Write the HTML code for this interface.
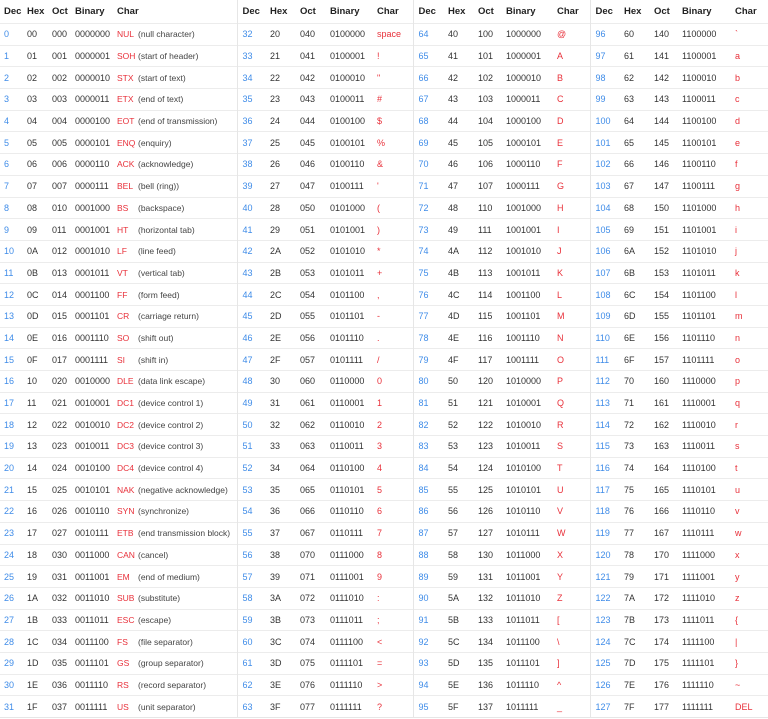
<!DOCTYPE html>
<html><head><meta charset="utf-8"><style>
html,body{margin:0;padding:0;background:#fff;width:768px;height:719px;overflow:hidden}
table{border-collapse:collapse;table-layout:fixed;width:768px;font-family:"Liberation Sans",sans-serif;font-size:9px;color:#333}
td,th{padding:0 0 0 4px;text-align:left;white-space:nowrap;overflow:hidden;border-top:1px solid #ececec}
th{font-weight:bold;height:23px;border-top:none;font-size:9.5px;color:#222}
tr.r td{height:20.7px}
td.d{color:#3f8ce8}
td.c,span.a{color:#e8303a}
span.a{display:inline-block;width:21px;font-size:8.5px;overflow:visible}
span.s{color:#444;font-size:8.5px}
.g{border-left:1px solid #e6e6e6;padding-left:5px}
table{border-bottom:1px solid #e6e6e6}
</style></head><body>
<table>
<colgroup><col style="width:23px"><col style="width:25px"><col style="width:23px"><col style="width:42px"><col style="width:124px">
<col style="width:29px"><col style="width:30px"><col style="width:30px"><col style="width:47px"><col style="width:40px">
<col style="width:31px"><col style="width:30px"><col style="width:28px"><col style="width:51px"><col style="width:37px">
<col style="width:30px"><col style="width:30px"><col style="width:28px"><col style="width:53px"><col style="width:37px"></colgroup>
<tr><th>Dec</th><th>Hex</th><th>Oct</th><th>Binary</th><th>Char</th><th class="g">Dec</th><th>Hex</th><th>Oct</th><th>Binary</th><th>Char</th><th class="g">Dec</th><th>Hex</th><th>Oct</th><th>Binary</th><th>Char</th><th class="g">Dec</th><th>Hex</th><th>Oct</th><th>Binary</th><th>Char</th></tr>
<tr class="r"><td class="d">0</td><td>00</td><td>000</td><td>0000000</td><td><span class="a">NUL</span><span class="s">(null character)</span></td><td class="d g">32</td><td>20</td><td>040</td><td>0100000</td><td class="c">space</td><td class="d g">64</td><td>40</td><td>100</td><td>1000000</td><td class="c">@</td><td class="d g">96</td><td>60</td><td>140</td><td>1100000</td><td class="c">`</td></tr>
<tr class="r"><td class="d">1</td><td>01</td><td>001</td><td>0000001</td><td><span class="a">SOH</span><span class="s">(start of header)</span></td><td class="d g">33</td><td>21</td><td>041</td><td>0100001</td><td class="c">!</td><td class="d g">65</td><td>41</td><td>101</td><td>1000001</td><td class="c">A</td><td class="d g">97</td><td>61</td><td>141</td><td>1100001</td><td class="c">a</td></tr>
<tr class="r"><td class="d">2</td><td>02</td><td>002</td><td>0000010</td><td><span class="a">STX</span><span class="s">(start of text)</span></td><td class="d g">34</td><td>22</td><td>042</td><td>0100010</td><td class="c">"</td><td class="d g">66</td><td>42</td><td>102</td><td>1000010</td><td class="c">B</td><td class="d g">98</td><td>62</td><td>142</td><td>1100010</td><td class="c">b</td></tr>
<tr class="r"><td class="d">3</td><td>03</td><td>003</td><td>0000011</td><td><span class="a">ETX</span><span class="s">(end of text)</span></td><td class="d g">35</td><td>23</td><td>043</td><td>0100011</td><td class="c">#</td><td class="d g">67</td><td>43</td><td>103</td><td>1000011</td><td class="c">C</td><td class="d g">99</td><td>63</td><td>143</td><td>1100011</td><td class="c">c</td></tr>
<tr class="r"><td class="d">4</td><td>04</td><td>004</td><td>0000100</td><td><span class="a">EOT</span><span class="s">(end of transmission)</span></td><td class="d g">36</td><td>24</td><td>044</td><td>0100100</td><td class="c">$</td><td class="d g">68</td><td>44</td><td>104</td><td>1000100</td><td class="c">D</td><td class="d g">100</td><td>64</td><td>144</td><td>1100100</td><td class="c">d</td></tr>
<tr class="r"><td class="d">5</td><td>05</td><td>005</td><td>0000101</td><td><span class="a">ENQ</span><span class="s">(enquiry)</span></td><td class="d g">37</td><td>25</td><td>045</td><td>0100101</td><td class="c">%</td><td class="d g">69</td><td>45</td><td>105</td><td>1000101</td><td class="c">E</td><td class="d g">101</td><td>65</td><td>145</td><td>1100101</td><td class="c">e</td></tr>
<tr class="r"><td class="d">6</td><td>06</td><td>006</td><td>0000110</td><td><span class="a">ACK</span><span class="s">(acknowledge)</span></td><td class="d g">38</td><td>26</td><td>046</td><td>0100110</td><td class="c">&amp;</td><td class="d g">70</td><td>46</td><td>106</td><td>1000110</td><td class="c">F</td><td class="d g">102</td><td>66</td><td>146</td><td>1100110</td><td class="c">f</td></tr>
<tr class="r"><td class="d">7</td><td>07</td><td>007</td><td>0000111</td><td><span class="a">BEL</span><span class="s">(bell (ring))</span></td><td class="d g">39</td><td>27</td><td>047</td><td>0100111</td><td class="c">'</td><td class="d g">71</td><td>47</td><td>107</td><td>1000111</td><td class="c">G</td><td class="d g">103</td><td>67</td><td>147</td><td>1100111</td><td class="c">g</td></tr>
<tr class="r"><td class="d">8</td><td>08</td><td>010</td><td>0001000</td><td><span class="a">BS</span><span class="s">(backspace)</span></td><td class="d g">40</td><td>28</td><td>050</td><td>0101000</td><td class="c">(</td><td class="d g">72</td><td>48</td><td>110</td><td>1001000</td><td class="c">H</td><td class="d g">104</td><td>68</td><td>150</td><td>1101000</td><td class="c">h</td></tr>
<tr class="r"><td class="d">9</td><td>09</td><td>011</td><td>0001001</td><td><span class="a">HT</span><span class="s">(horizontal tab)</span></td><td class="d g">41</td><td>29</td><td>051</td><td>0101001</td><td class="c">)</td><td class="d g">73</td><td>49</td><td>111</td><td>1001001</td><td class="c">I</td><td class="d g">105</td><td>69</td><td>151</td><td>1101001</td><td class="c">i</td></tr>
<tr class="r"><td class="d">10</td><td>0A</td><td>012</td><td>0001010</td><td><span class="a">LF</span><span class="s">(line feed)</span></td><td class="d g">42</td><td>2A</td><td>052</td><td>0101010</td><td class="c">*</td><td class="d g">74</td><td>4A</td><td>112</td><td>1001010</td><td class="c">J</td><td class="d g">106</td><td>6A</td><td>152</td><td>1101010</td><td class="c">j</td></tr>
<tr class="r"><td class="d">11</td><td>0B</td><td>013</td><td>0001011</td><td><span class="a">VT</span><span class="s">(vertical tab)</span></td><td class="d g">43</td><td>2B</td><td>053</td><td>0101011</td><td class="c">+</td><td class="d g">75</td><td>4B</td><td>113</td><td>1001011</td><td class="c">K</td><td class="d g">107</td><td>6B</td><td>153</td><td>1101011</td><td class="c">k</td></tr>
<tr class="r"><td class="d">12</td><td>0C</td><td>014</td><td>0001100</td><td><span class="a">FF</span><span class="s">(form feed)</span></td><td class="d g">44</td><td>2C</td><td>054</td><td>0101100</td><td class="c">,</td><td class="d g">76</td><td>4C</td><td>114</td><td>1001100</td><td class="c">L</td><td class="d g">108</td><td>6C</td><td>154</td><td>1101100</td><td class="c">l</td></tr>
<tr class="r"><td class="d">13</td><td>0D</td><td>015</td><td>0001101</td><td><span class="a">CR</span><span class="s">(carriage return)</span></td><td class="d g">45</td><td>2D</td><td>055</td><td>0101101</td><td class="c">-</td><td class="d g">77</td><td>4D</td><td>115</td><td>1001101</td><td class="c">M</td><td class="d g">109</td><td>6D</td><td>155</td><td>1101101</td><td class="c">m</td></tr>
<tr class="r"><td class="d">14</td><td>0E</td><td>016</td><td>0001110</td><td><span class="a">SO</span><span class="s">(shift out)</span></td><td class="d g">46</td><td>2E</td><td>056</td><td>0101110</td><td class="c">.</td><td class="d g">78</td><td>4E</td><td>116</td><td>1001110</td><td class="c">N</td><td class="d g">110</td><td>6E</td><td>156</td><td>1101110</td><td class="c">n</td></tr>
<tr class="r"><td class="d">15</td><td>0F</td><td>017</td><td>0001111</td><td><span class="a">SI</span><span class="s">(shift in)</span></td><td class="d g">47</td><td>2F</td><td>057</td><td>0101111</td><td class="c">/</td><td class="d g">79</td><td>4F</td><td>117</td><td>1001111</td><td class="c">O</td><td class="d g">111</td><td>6F</td><td>157</td><td>1101111</td><td class="c">o</td></tr>
<tr class="r"><td class="d">16</td><td>10</td><td>020</td><td>0010000</td><td><span class="a">DLE</span><span class="s">(data link escape)</span></td><td class="d g">48</td><td>30</td><td>060</td><td>0110000</td><td class="c">0</td><td class="d g">80</td><td>50</td><td>120</td><td>1010000</td><td class="c">P</td><td class="d g">112</td><td>70</td><td>160</td><td>1110000</td><td class="c">p</td></tr>
<tr class="r"><td class="d">17</td><td>11</td><td>021</td><td>0010001</td><td><span class="a">DC1</span><span class="s">(device control 1)</span></td><td class="d g">49</td><td>31</td><td>061</td><td>0110001</td><td class="c">1</td><td class="d g">81</td><td>51</td><td>121</td><td>1010001</td><td class="c">Q</td><td class="d g">113</td><td>71</td><td>161</td><td>1110001</td><td class="c">q</td></tr>
<tr class="r"><td class="d">18</td><td>12</td><td>022</td><td>0010010</td><td><span class="a">DC2</span><span class="s">(device control 2)</span></td><td class="d g">50</td><td>32</td><td>062</td><td>0110010</td><td class="c">2</td><td class="d g">82</td><td>52</td><td>122</td><td>1010010</td><td class="c">R</td><td class="d g">114</td><td>72</td><td>162</td><td>1110010</td><td class="c">r</td></tr>
<tr class="r"><td class="d">19</td><td>13</td><td>023</td><td>0010011</td><td><span class="a">DC3</span><span class="s">(device control 3)</span></td><td class="d g">51</td><td>33</td><td>063</td><td>0110011</td><td class="c">3</td><td class="d g">83</td><td>53</td><td>123</td><td>1010011</td><td class="c">S</td><td class="d g">115</td><td>73</td><td>163</td><td>1110011</td><td class="c">s</td></tr>
<tr class="r"><td class="d">20</td><td>14</td><td>024</td><td>0010100</td><td><span class="a">DC4</span><span class="s">(device control 4)</span></td><td class="d g">52</td><td>34</td><td>064</td><td>0110100</td><td class="c">4</td><td class="d g">84</td><td>54</td><td>124</td><td>1010100</td><td class="c">T</td><td class="d g">116</td><td>74</td><td>164</td><td>1110100</td><td class="c">t</td></tr>
<tr class="r"><td class="d">21</td><td>15</td><td>025</td><td>0010101</td><td><span class="a">NAK</span><span class="s">(negative acknowledge)</span></td><td class="d g">53</td><td>35</td><td>065</td><td>0110101</td><td class="c">5</td><td class="d g">85</td><td>55</td><td>125</td><td>1010101</td><td class="c">U</td><td class="d g">117</td><td>75</td><td>165</td><td>1110101</td><td class="c">u</td></tr>
<tr class="r"><td class="d">22</td><td>16</td><td>026</td><td>0010110</td><td><span class="a">SYN</span><span class="s">(synchronize)</span></td><td class="d g">54</td><td>36</td><td>066</td><td>0110110</td><td class="c">6</td><td class="d g">86</td><td>56</td><td>126</td><td>1010110</td><td class="c">V</td><td class="d g">118</td><td>76</td><td>166</td><td>1110110</td><td class="c">v</td></tr>
<tr class="r"><td class="d">23</td><td>17</td><td>027</td><td>0010111</td><td><span class="a">ETB</span><span class="s">(end transmission block)</span></td><td class="d g">55</td><td>37</td><td>067</td><td>0110111</td><td class="c">7</td><td class="d g">87</td><td>57</td><td>127</td><td>1010111</td><td class="c">W</td><td class="d g">119</td><td>77</td><td>167</td><td>1110111</td><td class="c">w</td></tr>
<tr class="r"><td class="d">24</td><td>18</td><td>030</td><td>0011000</td><td><span class="a">CAN</span><span class="s">(cancel)</span></td><td class="d g">56</td><td>38</td><td>070</td><td>0111000</td><td class="c">8</td><td class="d g">88</td><td>58</td><td>130</td><td>1011000</td><td class="c">X</td><td class="d g">120</td><td>78</td><td>170</td><td>1111000</td><td class="c">x</td></tr>
<tr class="r"><td class="d">25</td><td>19</td><td>031</td><td>0011001</td><td><span class="a">EM</span><span class="s">(end of medium)</span></td><td class="d g">57</td><td>39</td><td>071</td><td>0111001</td><td class="c">9</td><td class="d g">89</td><td>59</td><td>131</td><td>1011001</td><td class="c">Y</td><td class="d g">121</td><td>79</td><td>171</td><td>1111001</td><td class="c">y</td></tr>
<tr class="r"><td class="d">26</td><td>1A</td><td>032</td><td>0011010</td><td><span class="a">SUB</span><span class="s">(substitute)</span></td><td class="d g">58</td><td>3A</td><td>072</td><td>0111010</td><td class="c">:</td><td class="d g">90</td><td>5A</td><td>132</td><td>1011010</td><td class="c">Z</td><td class="d g">122</td><td>7A</td><td>172</td><td>1111010</td><td class="c">z</td></tr>
<tr class="r"><td class="d">27</td><td>1B</td><td>033</td><td>0011011</td><td><span class="a">ESC</span><span class="s">(escape)</span></td><td class="d g">59</td><td>3B</td><td>073</td><td>0111011</td><td class="c">;</td><td class="d g">91</td><td>5B</td><td>133</td><td>1011011</td><td class="c">[</td><td class="d g">123</td><td>7B</td><td>173</td><td>1111011</td><td class="c">{</td></tr>
<tr class="r"><td class="d">28</td><td>1C</td><td>034</td><td>0011100</td><td><span class="a">FS</span><span class="s">(file separator)</span></td><td class="d g">60</td><td>3C</td><td>074</td><td>0111100</td><td class="c">&lt;</td><td class="d g">92</td><td>5C</td><td>134</td><td>1011100</td><td class="c">\</td><td class="d g">124</td><td>7C</td><td>174</td><td>1111100</td><td class="c">|</td></tr>
<tr class="r"><td class="d">29</td><td>1D</td><td>035</td><td>0011101</td><td><span class="a">GS</span><span class="s">(group separator)</span></td><td class="d g">61</td><td>3D</td><td>075</td><td>0111101</td><td class="c">=</td><td class="d g">93</td><td>5D</td><td>135</td><td>1011101</td><td class="c">]</td><td class="d g">125</td><td>7D</td><td>175</td><td>1111101</td><td class="c">}</td></tr>
<tr class="r"><td class="d">30</td><td>1E</td><td>036</td><td>0011110</td><td><span class="a">RS</span><span class="s">(record separator)</span></td><td class="d g">62</td><td>3E</td><td>076</td><td>0111110</td><td class="c">&gt;</td><td class="d g">94</td><td>5E</td><td>136</td><td>1011110</td><td class="c">^</td><td class="d g">126</td><td>7E</td><td>176</td><td>1111110</td><td class="c">~</td></tr>
<tr class="r"><td class="d">31</td><td>1F</td><td>037</td><td>0011111</td><td><span class="a">US</span><span class="s">(unit separator)</span></td><td class="d g">63</td><td>3F</td><td>077</td><td>0111111</td><td class="c">?</td><td class="d g">95</td><td>5F</td><td>137</td><td>1011111</td><td class="c">_</td><td class="d g">127</td><td>7F</td><td>177</td><td>1111111</td><td class="c">DEL</td></tr>
</table>
</body></html>
